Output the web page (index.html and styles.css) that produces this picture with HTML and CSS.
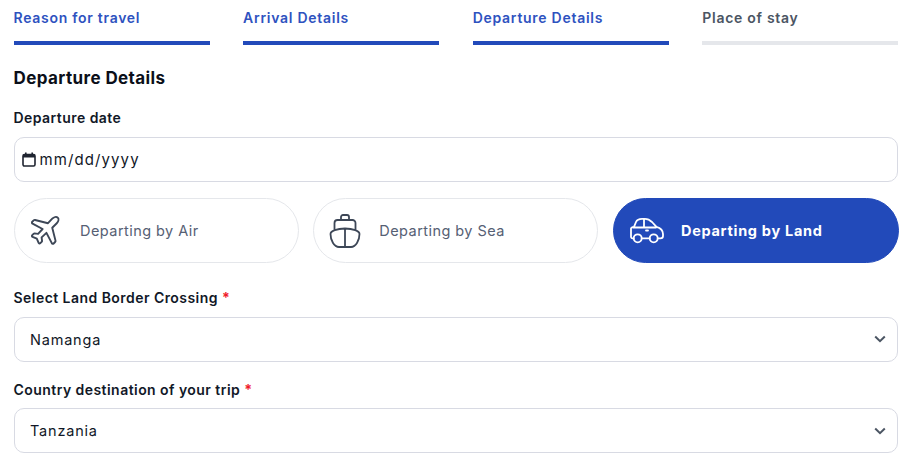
FILE: index.html
```html
<!DOCTYPE html>
<html lang="en">
<head>
<meta charset="utf-8">
<title>Departure Details</title>
<link rel="stylesheet" href="styles.css">
</head>
<body>
<main class="page">
  <nav class="steps">
    <div class="step done">Reason for travel</div>
    <div class="step done">Arrival Details</div>
    <div class="step done">Departure Details</div>
    <div class="step">Place of stay</div>
  </nav>
  <h2 class="title">Departure Details</h2>
  <div class="label first">Departure date</div>
  <div class="field date">
    <svg class="cal" viewBox="0 0 14 15" width="14" height="15" aria-hidden="true"><path d="M1 3h12v2.500H1z" fill="#1f2430"/><path d="M3.800 .6v2.400M10.200 .6v2.400" fill="none" stroke="#1f2430" stroke-width="1.600"/><rect x="1" y="2.500" width="12" height="11.500" rx="1.400" fill="none" stroke="#1f2430" stroke-width="1.600"/></svg>
    <span>mm/dd/yyyy</span>
  </div>
  <div class="modes">
    <div class="mode">
      <svg class="ico plane" viewBox="0 0 24 24" aria-hidden="true"><path d="M16.200 3.300c1.100-1.100 2.900-1.600 3.900-.7 1 1 .4 2.800-.7 3.900l-3.200 3.200 2.300 9.100c.1.400 0 .7-.3 1l-1 1c-.4.400-1 .3-1.300-.2l-3.800-7.300-3.400 3.200.3 2.500c0 .3-.1.500-.3.700l-.9.900c-.4.400-1 .3-1.200-.2l-1.300-3-3-1.300c-.5-.2-.6-.8-.2-1.200l.9-.9c.2-.2.400-.3.700-.3l2.500.3 3.200-3.400L2.300 6.800c-.5-.3-.6-.9-.2-1.300l1-1c.3-.3.600-.4 1-.3l9.100 2.300z" transform="translate(-.5 0)"/></svg>
      <span>Departing by Air</span>
    </div>
    <div class="mode">
      <svg class="ico" viewBox="0 0 34 34" aria-hidden="true"><path d="M1.500 20C1.500 17 8 14.500 16 14.500S30.500 17 30.500 20C30.500 26 27 33 22 33H10C5 33 1.500 26 1.500 20ZM16 14.500V33M5.500 15.500V9A3 3 0 0 1 8.500 6H23.500A3 3 0 0 1 26.500 9V15.500M12 6V3A2 2 0 0 1 14 1H18A2 2 0 0 1 20 3V6"/></svg>
      <span>Departing by Sea</span>
    </div>
    <div class="mode active">
      <svg class="ico" viewBox="0 0 34 26" aria-hidden="true"><path d="M3.700 20.300H2.500C1.500 20.300 1 19.500 1 18.500V10.500C1 9.500 2.500 9 4 8.800L6 4C7 1.500 9 .8 12 .8H15C18 .8 20 2 22 4L26.500 8.800C30 9.800 33 12 33 16V18C33 19.500 32 20.300 30.500 20.300H27.700M11.700 20.300H19.700M3 9.500H26M14 .8V9M16 12.500H18"/><circle cx="7.700" cy="20.300" r="4"/><circle cx="23.700" cy="20.300" r="4"/></svg>
      <span>Departing by Land</span>
    </div>
  </div>
  <div class="label">Select Land Border Crossing <b class="req">*</b></div>
  <div class="field select">
    <span>Namanga</span>
    <svg class="chev" viewBox="0 0 12 8" width="12" height="8" aria-hidden="true"><path d="M1.200 1.500 6 6.200l4.800-4.700" fill="none" stroke="#4b5563" stroke-width="2"/></svg>
  </div>
  <div class="label second">Country destination of your trip <b class="req">*</b></div>
  <div class="field select">
    <span>Tanzania</span>
    <svg class="chev" viewBox="0 0 12 8" width="12" height="8" aria-hidden="true"><path d="M1.200 1.500 6 6.200l4.800-4.700" fill="none" stroke="#4b5563" stroke-width="2"/></svg>
  </div>
</main>
</body>
</html>
```
FILE: styles.css
```css
* { box-sizing: border-box; }
html, body { margin: 0; padding: 0; background: #fff; }
body { font-family: "Inter", "Noto Sans", sans-serif; color: #111827; overflow: hidden; }
.page { width: 911px; height: 460px; padding: 0 13px 0 13.500px; overflow: hidden; }

.steps { display: grid; grid-template-columns: repeat(4, 196px); column-gap: 33.600px; padding-top: 9px; }
.step { height: 36px; border-bottom: 4px solid #e5e7eb; font-size: 14px; line-height: 18px; font-weight: 600; color: #4b5563; letter-spacing: .72px; }
.step.done { border-bottom-color: #224aba; color: #2e52bf; }

.title { margin: 23px 0 0; font-size: 17px; line-height: 20px; font-weight: 700; color: #0b0f19; letter-spacing: .4px; }

.label { font-size: 14px; line-height: 18px; font-weight: 600; color: #111827; letter-spacing: .45px; margin-top: 26px; }
.label.first { margin-top: 21px; }
.label.second { margin-top: 19px; }
.req { color: #ef1c2c; font-weight: 700; }

.field { display: flex; align-items: center; width: 884px; height: 45px; margin-top: 9.500px; border: 1px solid #d8dae3; border-radius: 10px; background: #fff; font-size: 14.500px; font-weight: 400; color: #111827; letter-spacing: .8px; }
.label.first + .field { margin-top: 10px; }
.date { padding-left: 7px; gap: 4px; font-size: 15px; letter-spacing: 1.100px; }
.cal { flex: none; }
.select { justify-content: space-between; padding: 0 11px 0 15.500px; }

.modes { display: grid; grid-template-columns: 285px 285.500px 286px; column-gap: 14.250px; margin-top: 16px; }
.mode { display: flex; align-items: center; gap: 16.500px; height: 65px; padding-left: 15px; border: 1px solid #e5e7eb; border-radius: 33px; font-size: 14.500px; font-weight: 400; color: #566074; letter-spacing: .45px; }
.mode .ico { flex: none; width: 34px; height: 34px; fill: none; stroke: #3d4757; stroke-width: 1.800; stroke-linejoin: round; stroke-linecap: round; }
.mode .plane { stroke-width: 1.350; }
.mode.active { background: #224aba; border-color: #224aba; color: #fff; font-weight: 700; letter-spacing: .7px; padding-left: 16px; gap: 17.500px; }
.mode.active .ico { stroke: #fff; }
```
